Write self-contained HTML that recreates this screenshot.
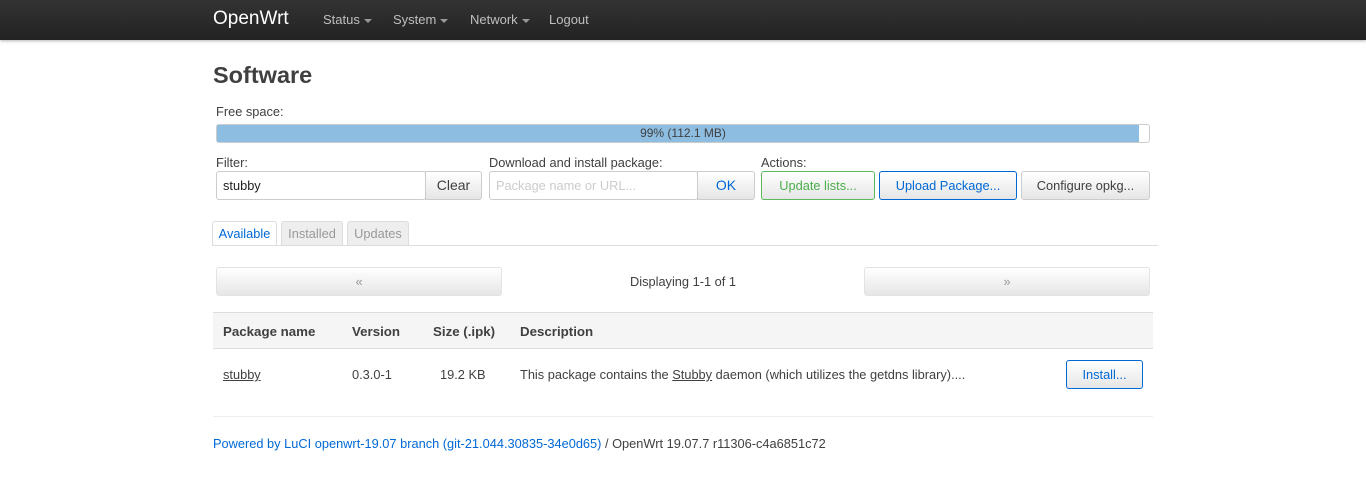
<!DOCTYPE html>
<html><head><style>
*{box-sizing:border-box}
body{margin:0;width:1366px;height:482px;background:#fff;font-family:"Liberation Sans",sans-serif;font-size:12.8px;color:#404040;position:relative;overflow:hidden}
.a{position:absolute}
.nav{left:0;top:0;width:1366px;height:40px;background:linear-gradient(#333,#222);box-shadow:0 1px 3px rgba(0,0,0,.3)}
.nav span{position:absolute;color:#bfbfbf;font-size:13px;top:12px}
.caret{display:inline-block;border-left:4px solid transparent;border-right:4px solid transparent;border-top:4px solid #999;vertical-align:middle;margin-left:4px}
.btn{position:absolute;height:29px;border:1px solid #ccc;border-radius:3px;background:linear-gradient(#fff,#e6e6e6);text-align:center;line-height:27px;font-size:12.8px;color:#404040}
.inp{position:absolute;height:29px;border:1px solid #ccc;border-radius:3px;padding-left:6px;line-height:27px;font-size:12.8px}
.tab{position:absolute;top:221px;height:24px;border:1px solid #ddd;border-bottom:none;border-radius:3px 3px 0 0;line-height:23px;text-align:center;background:#eee;color:#999}
</style></head><body>
<div class="a nav">
<span style="left:213px;top:8px;font-size:19px;color:#fff">OpenWrt</span>
<span style="left:323px">Status<i class="caret"></i></span>
<span style="left:393px">System<i class="caret"></i></span>
<span style="left:470px">Network<i class="caret"></i></span>
<span style="left:549px">Logout</span>
</div>
<div class="a" style="left:213px;top:62px;font-size:23.5px;font-weight:bold;color:#404040">Software</div>
<div class="a" style="left:216px;top:104px">Free space:</div>
<div class="a" style="left:216px;top:124px;width:934px;height:19px;border:1px solid #ccc;border-radius:3px;background:#fff">
<div style="width:922px;height:17px;background:#8dbde0"></div>
<div class="a" style="left:0;top:1px;width:100%;text-align:center;font-size:12px;color:#404040">99% (112.1 MB)</div></div>
<div class="a" style="left:216px;top:155px">Filter:</div>
<div class="inp" style="left:216px;top:171px;width:210px;color:#222">stubby</div>
<div class="btn" style="left:425px;top:171px;width:57px;border-radius:0 3px 3px 0;font-size:14px">Clear</div>
<div class="a" style="left:489px;top:155px">Download and install package:</div>
<div class="inp" style="left:489px;top:171px;width:209px;color:#ccc">Package name or URL...</div>
<div class="btn" style="left:697px;top:171px;width:58px;border-radius:0 3px 3px 0;color:#0069d6;font-size:14px">OK</div>
<div class="a" style="left:761px;top:155px">Actions:</div>
<div class="btn" style="left:761px;top:171px;width:114px;border-color:#5cb85c;color:#4cae4c">Update lists...</div>
<div class="btn" style="left:879px;top:171px;width:138px;border-color:#0069d6;color:#0069d6">Upload Package...</div>
<div class="btn" style="left:1021px;top:171px;width:129px">Configure opkg...</div>
<div class="tab" style="left:212px;width:65px;background:#fff;color:#0069d6;height:25px">Available</div>
<div class="tab" style="left:281px;width:62px">Installed</div>
<div class="tab" style="left:347px;width:62px">Updates</div>
<div class="a" style="left:213px;top:245px;width:945px;border-top:1px solid #ddd"></div>
<div class="btn" style="left:216px;top:267px;width:286px;height:29px;color:#999;border-color:#e3e3e3">«</div>
<div class="a" style="left:630px;top:274px">Displaying 1-1 of 1</div>
<div class="btn" style="left:864px;top:267px;width:286px;height:29px;color:#999;border-color:#e3e3e3">»</div>
<div class="a" style="left:213px;top:312px;width:940px;height:37px;background:#f5f5f5;border-top:1px solid #ddd;border-bottom:1px solid #ddd"></div>
<div class="a" style="left:223px;top:324px;font-weight:bold;font-size:13.3px">Package name</div>
<div class="a" style="left:352px;top:324px;font-weight:bold;font-size:13.3px">Version</div>
<div class="a" style="left:433px;top:324px;font-weight:bold;font-size:13.3px">Size (.ipk)</div>
<div class="a" style="left:520px;top:324px;font-weight:bold;font-size:13.3px">Description</div>
<div class="a" style="left:223px;top:367px;text-decoration:underline">stubby</div>
<div class="a" style="left:352px;top:367px">0.3.0-1</div>
<div class="a" style="left:440px;top:367px">19.2 KB</div>
<div class="a" style="left:520px;top:367px">This package contains the <u>Stubby</u> daemon (which utilizes the getdns library)....</div>
<div class="btn" style="left:1066px;top:360px;width:77px;border-color:#0069d6;color:#0069d6">Install...</div>
<div class="a" style="left:213px;top:416px;width:940px;border-top:1px solid #eee"></div>
<div class="a" style="left:213px;top:436px"><span style="color:#0069d6">Powered by LuCI openwrt-19.07 branch (git-21.044.30835-34e0d65)</span> / OpenWrt 19.07.7 r11306-c4a6851c72</div>
</body></html>
